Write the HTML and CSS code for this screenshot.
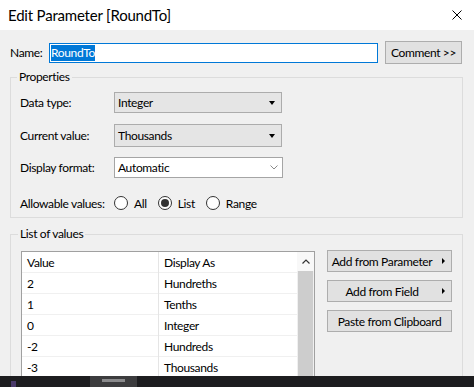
FILE: index.html
```html
<!DOCTYPE html>
<html lang="en">
<head>
    <meta charset="UTF-8">
    <meta name="viewport" content="width=device-width, initial-scale=1.0">
    <title>Edit Parameter</title>
    <link rel="stylesheet" href="styles.css">
</head>
<body>

<div class="window">
    <div class="titlebar">
        <span class="title">Edit Parameter [RoundTo]</span>
        <svg class="close" viewBox="0 0 10 10" width="10" height="10">
            <path d="M0.5 0.5 L9.5 9.5 M9.5 0.5 L0.5 9.5" stroke="#000" stroke-width="1" fill="none"/>
        </svg>
    </div>

    <div class="dialog">
        <!-- Name -->
        <div class="name-row">
            <label class="name-label">Name:</label>
            <div class="textbox"><span class="sel">RoundTo</span></div>
            <button class="btn comment">Comment &gt;&gt;</button>
        </div>

        <!-- Properties -->
        <fieldset class="group props">
            <legend>Properties</legend>
            <div class="prop-row row-type">
                <span class="prop-label">Data type:</span>
                <div class="combo">Integer<span class="tri"></span></div>
            </div>
            <div class="prop-row row-current">
                <span class="prop-label">Current value:</span>
                <div class="combo">Thousands<span class="tri"></span></div>
            </div>
            <div class="prop-row row-format">
                <span class="prop-label">Display format:</span>
                <div class="combo combo-edit">Automatic
                    <svg class="chev" viewBox="0 0 8 5" width="8" height="5">
                        <path d="M0.5 0.5 L4 4 L7.5 0.5" stroke="#8a8a8a" stroke-width="1" fill="none"/>
                    </svg>
                </div>
            </div>
            <div class="prop-row row-allow">
                <span class="prop-label">Allowable values:</span>
                <span class="radio"><span class="dot"></span>All</span>
                <span class="radio"><span class="dot checked"></span>List</span>
                <span class="radio"><span class="dot"></span>Range</span>
            </div>
        </fieldset>

        <!-- List of values -->
        <fieldset class="group values">
            <legend>List of values</legend>
            <div class="values-body">
                <div class="listview">
                    <div class="lv-rows">
                        <div class="lv-row"><span>Value</span><span>Display As</span></div>
                        <div class="lv-row"><span>2</span><span>Hundreths</span></div>
                        <div class="lv-row"><span>1</span><span>Tenths</span></div>
                        <div class="lv-row"><span>0</span><span>Integer</span></div>
                        <div class="lv-row"><span>-2</span><span>Hundreds</span></div>
                        <div class="lv-row"><span>-3</span><span>Thousands</span></div>
                    </div>
                    <div class="scrollbar">
                        <div class="sb-up">
                            <svg viewBox="0 0 8 5" width="8" height="5">
                                <path d="M0.5 4.5 L4 1 L7.5 4.5" stroke="#333" stroke-width="1.2" fill="none"/>
                            </svg>
                        </div>
                        <div class="sb-thumb"></div>
                    </div>
                </div>
                <div class="side-buttons">
                    <button class="btn side-btn"><span class="side-text">Add from Parameter</span><span class="side-arrow"></span></button>
                    <button class="btn side-btn"><span class="side-text">Add from Field</span><span class="side-arrow"></span></button>
                    <button class="btn side-btn"><span class="side-text">Paste from Clipboard</span></button>
                </div>
            </div>
        </fieldset>
    </div>

    <!-- Windows taskbar peeking in at the bottom -->
    <div class="taskbar">
        <span class="tb-icon"></span>
        <span class="tb-app"><span class="tb-app-bar"></span></span>
    </div>
</div>

</body>
</html>
```

FILE: styles.css
```css
* {
    box-sizing: border-box;
}
body {
    font-family: Lato, "Segoe UI", sans-serif;
    font-size: 12px;
    letter-spacing: -0.35px;
    color: #000;
    background-color: #f0f0f0;
    margin: 0;
    padding: 0;
    overflow: hidden;
}
.window {
    display: flex;
    flex-direction: column;
    height: 387px;
}
/* Title bar */
.titlebar {
    height: 30px;
    flex-shrink: 0;
    background-color: #fff;
    display: flex;
    align-items: center;
    justify-content: space-between;
    padding: 0 12px 0 8px;
}
.title {
    font-size: 15px;
    letter-spacing: -0.2px;
}
.close {
    display: block;
}
/* Dialog body */
.dialog {
    flex: 1;
    overflow: hidden;
    padding: 11px 11px 0 10px;
}
.name-row {
    display: flex;
    align-items: center;
    height: 23px;
}
.name-label {
    width: 39px;
}
.textbox {
    width: 329px;
    height: 20px;
    background-color: #fff;
    border: 1px solid #0078d7;
    padding: 1px 1px;
    line-height: 16px;
}
.sel {
    display: inline-block;
    background-color: #0078d7;
    color: #fff;
}
.btn {
    font-family: inherit;
    font-size: 12px;
    letter-spacing: inherit;
    color: #000;
    background-color: #e1e1e1;
    border: 1px solid #adadad;
    padding: 0;
}
.comment {
    width: 77px;
    height: 23px;
    margin-left: 7px;
}
/* Group boxes */
.group {
    border: 1px solid #dcdcdc;
    margin: 0;
    padding: 0 9px;
    min-inline-size: 0;
}
.group legend {
    padding: 0 2px;
    margin-left: -3px;
    line-height: 16px;
}
.props {
    margin-top: 5px;
    padding-top: 7px;
    padding-bottom: 6px;
}
.prop-row {
    display: flex;
    align-items: center;
}
.prop-label {
    width: 94px;
}
.row-type {
    height: 21px;
}
.row-current {
    height: 23px;
    margin-top: 11px;
}
.row-format {
    height: 21px;
    margin-top: 10px;
}
.row-allow {
    height: 16px;
    margin-top: 17px;
}
.combo {
    width: 168px;
    height: 100%;
    display: flex;
    align-items: center;
    justify-content: space-between;
    padding: 0 6px 0 3px;
    background-color: #e5e5e5;
    border: 1px solid #acacac;
}
.combo-edit {
    width: 169px;
    background-color: #fff;
    border-color: #a5a5a5;
    padding-right: 4px;
}
.tri {
    width: 0;
    height: 0;
    border-left: 3px solid transparent;
    border-right: 3px solid transparent;
    border-top: 4px solid #000;
}
.radio {
    display: inline-flex;
    align-items: center;
    margin-right: 11px;
}
.dot {
    width: 14px;
    height: 14px;
    border: 1px solid #333;
    border-radius: 50%;
    background-color: #fff;
    margin-right: 6px;
    display: flex;
    align-items: center;
    justify-content: center;
}
.dot.checked::after {
    content: "";
    width: 8px;
    height: 8px;
    border-radius: 50%;
    background-color: #333;
}
.values {
    margin-top: 8px;
    padding-top: 9px;
    padding-left: 10px;
    height: 200px;
}
.values-body {
    display: flex;
    align-items: flex-start;
}
/* List view */
.listview {
    width: 294px;
    height: 150px;
    display: flex;
    background-color: #fff;
    border: 1px solid #a0a0a0;
}
.lv-rows {
    width: 275px;
}
.lv-row {
    display: grid;
    grid-template-columns: 137px 138px;
    height: 21px;
    line-height: 21px;
    border-bottom: 1px solid #f0f0f0;
}
.lv-row span {
    padding-left: 5px;
}
.lv-row span:first-child {
    border-right: 1px solid #e5e5e5;
}
.scrollbar {
    width: 17px;
    display: flex;
    flex-direction: column;
    background-color: #f0f0f0;
}
.sb-up {
    height: 19px;
    background-color: #f8f8f8;
    display: flex;
    align-items: center;
    justify-content: center;
}
.sb-thumb {
    flex: 1;
    margin: 0 1px;
    background-color: #cdcdcd;
}
.side-buttons {
    display: flex;
    flex-direction: column;
    margin-top: -1px;
    margin-left: 12px;
    gap: 8px;
}
.side-btn {
    width: 125px;
    height: 22px;
    display: flex;
    align-items: center;
}
.side-text {
    flex: 1;
    text-align: center;
}
.side-arrow {
    width: 15px;
    display: flex;
    justify-content: center;
}
.side-arrow::after {
    content: "";
    border-top: 3px solid transparent;
    border-bottom: 3px solid transparent;
    border-left: 3px solid #000;
}
/* Taskbar */
.taskbar {
    height: 11px;
    flex-shrink: 0;
    background-color: #1d1d1f;
    display: flex;
}
.tb-icon {
    width: 5px;
    margin-left: 11px;
    margin-top: 5px;
    background-color: #4a3a6a;
}
.tb-app {
    width: 47px;
    margin-left: 74px;
    padding-top: 3px;
    background-color: #3c3c3e;
    display: flex;
    justify-content: center;
}
.tb-app-bar {
    width: 23px;
    height: 3px;
    background-color: #8a8a8c;
}
```
